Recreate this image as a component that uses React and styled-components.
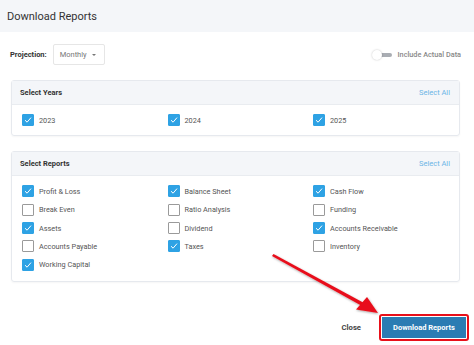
import React, { useState } from "react";
import styled, { createGlobalStyle } from "styled-components";

const GlobalStyle = createGlobalStyle`
 body {
 margin: 0;
 background: #fff;
 font-family: Roboto, "Liberation Sans", sans-serif;
 }
`;

const Page = styled.div`
 position: relative;
 width: 474px;
 height: 345px;
 overflow: hidden;
 background: #fff;
`;

const Header = styled.div`
 height: 32px;
 display: flex;
 align-items: center;
 padding-left: 7px;
 background: #f4f6f9;
 font-size: 11px;
 color: #333;
`;

const OptionsRow = styled.div`
 display: flex;
 align-items: center;
 justify-content: space-between;
 margin-top: 12px;
 padding: 0 13px 0 10px;
 height: 21px;
`;

const ProjectionGroup = styled.div`
 display: flex;
 align-items: center;
 gap: 6px;
`;

const FieldLabel = styled.span`
 font-size: 7.5px;
 font-weight: 700;
 color: #333;
`;

const SelectBox = styled.div`
 width: 52px;
 height: 21px;
 box-sizing: border-box;
 border: 1px solid #e6e6e6;
 border-radius: 2px;
 display: flex;
 align-items: center;
 justify-content: space-between;
 padding: 0 8px 0 6px;
 font-size: 7.5px;
 color: #777;
 &::after {
 content: "";
 border-left: 2.5px solid transparent;
 border-right: 2.5px solid transparent;
 border-top: 2.5px solid #777;
 }
`;

const ToggleGroup = styled.div`
 display: flex;
 align-items: center;
 gap: 6px;
 font-size: 7.3px;
 font-weight: 500;
 color: #888;
`;

const Track = styled.div`
 position: relative;
 width: 16px;
 height: 4px;
 border-radius: 2px;
 background: #a9adb3;
 margin-left: 5px;
`;

const Knob = styled.div`
 position: absolute;
 left: -4px;
 top: -3px;
 width: 10px;
 height: 10px;
 border-radius: 50%;
 background: #fff;
 box-shadow: 0 0 2px rgba(0, 0, 0, 0.25);
`;

const Card = styled.div`
 margin: ${(p) => p.$top}px 14px 0 11px;
 border: 1px solid #e6e9ee;
 border-radius: 3px;
 box-shadow: 0 1px 2px rgba(0, 0, 0, 0.04);
`;

const CardHeader = styled.div`
 height: 23px;
 display: flex;
 align-items: center;
 justify-content: space-between;
 padding: 0 9px 0 8px;
 background: #f4f6f9;
 border-bottom: 1px solid #e9ecf0;
 font-size: 7.5px;
 font-weight: 700;
 color: #333;
`;

const SelectAll = styled.span`
 font-weight: 400;
 color: #6cb5e6;
`;

const Grid = styled.div`
 display: grid;
 grid-template-columns: 145.5px 145.5px 145.5px;
 grid-auto-rows: 18.3px;
 padding: ${(p) => p.$pad};
 padding-left: 10px;
`;

const Item = styled.label`
 display: flex;
 align-items: center;
 gap: 5px;
 font-size: 7.3px;
 color: #555;
`;

const Box = styled.span`
 width: 12px;
 height: 12px;
 box-sizing: border-box;
 border-radius: 1px;
 border: 1px solid ${(p) => (p.$checked ? "#2ea2e4" : "#9a9a9a")};
 background: ${(p) => (p.$checked ? "#2ea2e4" : "#fff")};
 display: flex;
 align-items: center;
 justify-content: center;
`;

const Footer = styled.div`
 display: flex;
 justify-content: flex-end;
 align-items: center;
 gap: 18px;
 margin-top: 32px;
 padding-right: 5px;
`;

const CloseButton = styled.span`
 font-size: 7.7px;
 font-weight: 700;
 color: #444;
`;

const Highlight = styled.div`
 padding: 1px;
 border: 2px solid #e8101a;
 border-radius: 3px;
`;

const PrimaryButton = styled.div`
 width: 84px;
 height: 21px;
 display: flex;
 align-items: center;
 justify-content: center;
 background: #2b7cb3;
 color: #fff;
 font-size: 7.5px;
 font-weight: 700;
`;

const ArrowLayer = styled.svg`
 position: absolute;
 left: 0;
 top: 0;
 pointer-events: none;
`;

function Check({ checked }) {
  return (
    <Box $checked={checked}>
      {checked && (
        <svg width="8" height="8" viewBox="0 0 8 8">
          <path d="M1 4.2 L3.1 6.2 L7 1.6" fill="none" stroke="#fff" strokeWidth="1" />
        </svg>
      )}
    </Box>
  );
}

const years = [
  { label: "2023", checked: true },
  { label: "2024", checked: true },
  { label: "2025", checked: true },
];

const reports = [
  { label: "Profit & Loss", checked: true },
  { label: "Balance Sheet", checked: true },
  { label: "Cash Flow", checked: true },
  { label: "Break Even", checked: false },
  { label: "Ratio Analysis", checked: false },
  { label: "Funding", checked: false },
  { label: "Assets", checked: true },
  { label: "Dividend", checked: false },
  { label: "Accounts Receivable", checked: true },
  { label: "Accounts Payable", checked: false },
  { label: "Taxes", checked: true },
  { label: "Inventory", checked: false },
  { label: "Working Capital", checked: true },
];

export default function App() {
  const [yearList] = useState(years);
  return (
    <Page>
      <GlobalStyle />
      <Header>Download Reports</Header>
      <OptionsRow>
        <ProjectionGroup>
          <FieldLabel>Projection:</FieldLabel>
          <SelectBox>Monthly</SelectBox>
        </ProjectionGroup>
        <ToggleGroup>
          <Track>
            <Knob />
          </Track>
          Include Actual Data
        </ToggleGroup>
      </OptionsRow>

      <Card $top={15}>
        <CardHeader>
          Select Years
          <SelectAll>Select All</SelectAll>
        </CardHeader>
        <Grid $pad="6px 0 6px">
          {yearList.map((y) => (
            <Item key={y.label}>
              <Check checked={y.checked} />
              {y.label}
            </Item>
          ))}
        </Grid>
      </Card>

      <Card $top={15}>
        <CardHeader>
          Select Reports
          <SelectAll>Select All</SelectAll>
        </CardHeader>
        <Grid $pad="6px 0 7px">
          {reports.map((r) => (
            <Item key={r.label}>
              <Check checked={r.checked} />
              {r.label}
            </Item>
          ))}
        </Grid>
      </Card>

      <Footer>
        <CloseButton>Close</CloseButton>
        <Highlight>
          <PrimaryButton>Download Reports</PrimaryButton>
        </Highlight>
      </Footer>

      <ArrowLayer width="474" height="345" viewBox="0 0 474 345">
        <defs>
          <filter id="sh" x="-10%" y="-10%" width="120%" height="120%">
            <feDropShadow dx="0.5" dy="1" stdDeviation="0.8" floodOpacity="0.35" />
          </filter>
        </defs>
        <g filter="url(#sh)" fill="#e8101a">
          <path d="M272 256 L273.5 254 L364 303 L362 306 Z" />
          <path d="M378 313 L356 309.5 L367 297 Z" />
        </g>
      </ArrowLayer>
    </Page>
  );
}
